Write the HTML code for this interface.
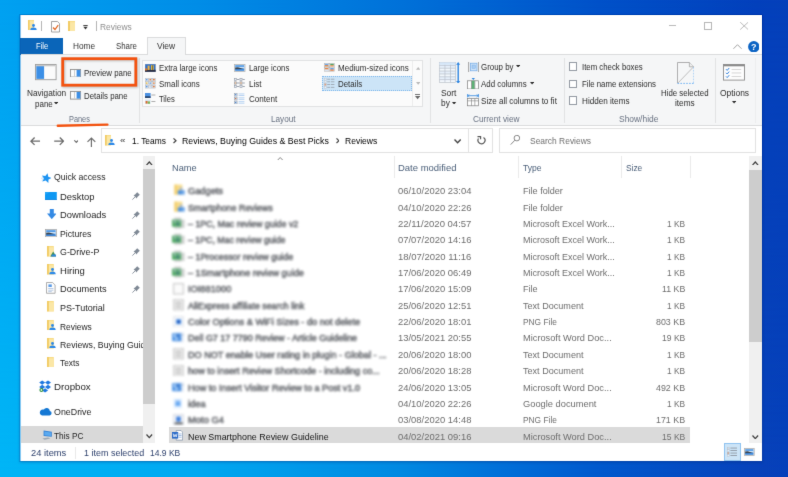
<!DOCTYPE html>
<html><head><meta charset="utf-8"><title>Reviews</title>
<style>
html,body{margin:0;padding:0}
body{width:788px;height:477px;overflow:hidden;position:relative;font-family:"Liberation Sans",sans-serif;
background:linear-gradient(to right,#00A1F1 0,#008DE7 25%,#0071D9 51%,#0051C9 76%,#0340BC 96%,#0540BA 100%)}
#w{position:absolute;left:0;top:0;width:788px;height:477px;filter:url(#soft)}
#w>div,#w>svg,#w>span{position:absolute;display:block}
#w>span{white-space:nowrap;line-height:1;transform-origin:0 50%;-webkit-text-stroke:0}
.b{filter:blur(.9px);opacity:.9;-webkit-text-stroke:.45px currentColor !important;text-shadow:0 0 1px rgba(90,92,96,.55)}
.bi{}
.s{}
</style></head><body>
<svg width="0" height="0" style="position:absolute"><filter id="soft" x="0" y="0" width="100%" height="100%" color-interpolation-filters="sRGB"><feConvolveMatrix order="3" kernelMatrix="0.0081 0.0738 0.0081 0.0738 0.6724 0.0738 0.0081 0.0738 0.0081" divisor="1" edgeMode="duplicate" preserveAlpha="true"/></filter></svg>
<div id="w">
<div style="left:0px;top:0px;width:788px;height:477px;background:linear-gradient(to right,#00B5F6 0,#00A9F1 25%,#0089E1 51%,#0071D9 63%,#0059CD 76%,#0741B9 97%,#0540BA 100%);-webkit-mask-image:linear-gradient(to bottom,transparent 0,#000 100%);mask-image:linear-gradient(to bottom,transparent 0,#000 100%)"></div>
<div style="left:20px;top:15px;width:742px;height:446px;background:#fff;box-shadow:0 0 0 1px rgba(0,60,150,.2),0 1px 3px 0 rgba(0,20,90,.3)"></div>
<div style="left:20px;top:15px;width:1px;height:446px;background:rgba(0,140,230,.45);"></div>
<svg style="left:27.8px;top:20.3px;" width="6.2" height="10" viewBox="0 0 6.2 10"><rect x="0" y="0" width="6.2" height="10" fill="#F8DC86"/><rect x="0" y="0" width="1.7360000000000002" height="10" fill="#F2CC66"/><rect x="1.7360000000000002" y="1.2" width="4.4639999999999995" height="8.8" fill="#FBE7A6"/></svg>
<svg style="left:30.4px;top:24.3px;" width="7" height="6.2" viewBox="0 0 7 6.2"><circle cx="3.5" cy="1.5" r="1.45" fill="#2B88E8"/><path d="M.3 6.2Q.3 3.6 3.5 3.6Q6.7 3.6 6.7 6.2Z" fill="#2B88E8"/></svg>
<div style="left:41px;top:21.3px;width:1px;height:10.0px;background:#b5b5b5;"></div>
<svg style="left:51px;top:21px;" width="9" height="11.5" viewBox="0 0 9 11.5"><path d="M0.5 0.5H6.5L8.5 2.5V11H0.5Z" fill="#fff" stroke="#8a8a8a" stroke-width=".8"/><path d="M2 6.5L4 8.5L7.2 4.2" fill="none" stroke="#E2641E" stroke-width="1.2"/></svg>
<svg style="left:68.2px;top:21.3px;" width="7.2" height="10" viewBox="0 0 7.2 10"><rect x="0" y="0" width="7.2" height="10" fill="#F8DC86"/><rect x="0" y="0" width="2.0160000000000005" height="10" fill="#F2CC66"/><rect x="2.0160000000000005" y="1.2" width="5.184" height="8.8" fill="#FBE7A6"/></svg>
<svg style="left:83.3px;top:25px;" width="5" height="5" viewBox="0 0 5 5"><rect x="0.3" y="0" width="4.4" height=".9" fill="#333"/><path d="M0.3 1.8H4.7L2.5 4.6Z" fill="#333"/></svg>
<div style="left:96px;top:21.3px;width:1px;height:10.0px;background:#b5b5b5;"></div>
<span style="left:100.4px;top:22.93px;font-size:8.6px;color:#8e8e8e;transform:scaleX(0.9789);">Reviews</span>
<div style="left:668.6px;top:25px;width:7.6px;height:1px;background:#b9b9b9;"></div>
<div style="left:704.4px;top:22.4px;width:7.6px;height:7.4px;background:transparent;border:1px solid #b6b6b6;box-sizing:border-box"></div>
<svg style="left:740px;top:22.2px;" width="8.4" height="7.8" viewBox="0 0 8.4 7.8"><path d="M0.2 0.2L8.2 7.6M8.2 0.2L0.2 7.6" stroke="#adadad" stroke-width=".85" fill="none"/></svg>
<svg style="left:733px;top:43.6px;" width="9" height="5.2" viewBox="0 0 9 5.2"><path d="M0.4 4.8L4.5 0.7L8.6 4.8" stroke="#a2a2a2" stroke-width="1" fill="none"/></svg>
<svg style="left:747.7px;top:40.5px;" width="11.6" height="11.6" viewBox="0 0 11.6 11.6"><circle cx="5.8" cy="5.8" r="5.7" fill="#0C64C4"/></svg>
<span style="left:750.8px;top:42.73px;font-size:8.6px;color:#fff;transform:scaleX(1.0476);font-weight:bold">?</span>
<div style="left:20px;top:37.5px;width:43.4px;height:17.1px;background:#0A65B9;"></div>
<span style="left:35.8px;top:42.13px;font-size:8.6px;color:#fff;transform:scaleX(0.8875);">File</span>
<span style="left:73.3px;top:42.13px;font-size:8.6px;color:#333;transform:scaleX(0.9635);">Home</span>
<span style="left:115.8px;top:42.13px;font-size:8.6px;color:#333;transform:scaleX(0.9155);">Share</span>
<div style="left:21px;top:54px;width:741px;height:72px;background:#F5F6F7;border-top:1px solid #DADBDC;border-bottom:1px solid #DADBDC;box-sizing:border-box"></div>
<div style="left:147px;top:37px;width:39px;height:18px;background:#F5F6F7;border:1px solid #DADBDC;border-bottom:none;box-sizing:border-box"></div>
<span style="left:157.3px;top:42.13px;font-size:8.6px;color:#333;transform:scaleX(0.9846);">View</span>
<div style="left:139.1px;top:58px;width:1.0px;height:64.5px;background:#E2E3E4;"></div>
<div style="left:429.7px;top:58px;width:1.0px;height:64.5px;background:#E2E3E4;"></div>
<div style="left:564.1px;top:58px;width:1.0px;height:64.5px;background:#E2E3E4;"></div>
<div style="left:714.8px;top:58px;width:1.0px;height:64.5px;background:#E2E3E4;"></div>
<div style="left:754.5px;top:58px;width:0.8px;height:64.5px;background:#ECEDEE;"></div>
<svg style="left:35.3px;top:64.4px;" width="21.6" height="16.2" viewBox="0 0 21.6 16.2"><rect x=".5" y=".5" width="20.6" height="15.2" fill="#fbfbfb" stroke="#9a9a9a" stroke-width=".9"/><rect x="1.3" y="1.6" width="7.8" height="13.3" fill="#3C8FE6"/><rect x="1.3" y="1" width="19" height="1.3" fill="#c9c9c9"/></svg>
<span style="left:26.5px;top:88.83px;font-size:8.6px;color:#2b2b2b;transform:scaleX(0.9653);">Navigation</span>
<span style="left:34.6px;top:99.53px;font-size:8.6px;color:#2b2b2b;transform:scaleX(0.9307);">pane</span>
<svg style="left:54px;top:101.7px;" width="4.2" height="2.6" viewBox="0 0 4.2 2.6"><path d="M0 0H4.2L2.1 2.6Z" fill="#2a2a2a"/></svg>
<svg style="left:70px;top:68.6px;" width="11.2" height="8.6" viewBox="0 0 11.2 8.6"><rect x=".5" y=".5" width="10.2" height="7.6" fill="#fdfdfd" stroke="#8d8d8d" stroke-width=".9"/><rect x="6.6" y="1" width="3.7" height="6.6" fill="#3C8FE6"/><rect x="4.2" y="1" width=".8" height="6.6" fill="#c4c4c4"/></svg>
<svg style="left:70px;top:91.1px;" width="11.2" height="8.6" viewBox="0 0 11.2 8.6"><rect x=".5" y=".5" width="10.2" height="7.6" fill="#fdfdfd" stroke="#8d8d8d" stroke-width=".9"/><rect x="6.6" y="1" width="3.7" height="6.6" fill="#3C8FE6"/><rect x="4.2" y="1" width=".8" height="6.6" fill="#c4c4c4"/></svg>
<span style="left:83.9px;top:68.93px;font-size:8.6px;color:#2b2b2b;transform:scaleX(0.9159);">Preview pane</span>
<span style="left:83.9px;top:91.53px;font-size:8.6px;color:#2b2b2b;transform:scaleX(0.9125);">Details pane</span>
<span style="left:69.1px;top:114.63px;font-size:8.6px;color:#677080;transform:scaleX(0.8574);">Panes</span>
<svg style="left:59px;top:54.6px;" width="82" height="36" viewBox="0 0 82 36"><rect x="4.7" y="4.7" width="73.1" height="26.6" fill="none" stroke="rgba(0,0,0,.22)" stroke-width="2.8" style="filter:blur(.9px)"/><rect x="3.7" y="3.7" width="73.1" height="26.5" fill="none" stroke="#F3520F" stroke-width="2.8"/></svg>
<svg style="left:55px;top:122px;" width="55" height="6" viewBox="0 0 55 6"><path d="M2.8 3.7L52.4 2.6" stroke="#F3520F" stroke-width="2.4" stroke-linecap="round" fill="none"/></svg>
<div style="left:142px;top:60px;width:281.2px;height:46.6px;background:#FBFBFB;border:1px solid #E1E2E3;box-sizing:border-box"></div>
<div style="left:412.2px;top:61px;width:0.8px;height:44.6px;background:#ECECEC;"></div>
<div style="left:322px;top:75.7px;width:90px;height:15.0px;background:#CCE4F7;border:1px dotted #7FB7EA;box-sizing:border-box"></div>
<svg style="left:415.6px;top:66.8px;" width="4.4" height="2.8" viewBox="0 0 4.4 2.8"><path d="M0 2.8L2.2 0L4.4 2.8Z" fill="#b9b9b9"/></svg>
<svg style="left:415.6px;top:81.8px;" width="4.4" height="2.8" viewBox="0 0 4.4 2.8"><path d="M0 0H4.4L2.2 2.8Z" fill="#b9b9b9"/></svg>
<svg style="left:415.2px;top:94.4px;" width="5.2" height="5.4" viewBox="0 0 5.2 5.4"><rect x="0" y="0" width="5.2" height=".9" fill="#666"/><path d="M0 2H5.2L2.6 5.2Z" fill="#666"/></svg>
<svg style="left:145.3px;top:64.3px;" width="10.6" height="7.8" viewBox="0 0 10.6 7.8"><rect width="10.6" height="7.8" fill="#2D6FCC" stroke="#9aa3af" stroke-width=".8"/><rect x="0" y="5.8" width="10.6" height="2" fill="#2A2F45"/><rect x="2.6" y="1.6" width="2" height="4.4" fill="#F2B13A"/><rect x="6" y="1.2" width="2.6" height="4.8" fill="#F5C53C"/><rect x="6.9" y="1.2" width=".7" height="4.8" fill="#3a3a3a"/><rect x="0" y="4.4" width="2.2" height="2" fill="#d9772e"/></svg>
<svg style="left:145.3px;top:78.2px;" width="10.8" height="10.4" viewBox="0 0 10.8 10.4"><rect x="0.2" y="0.2" width="3" height="2.9" fill="#eef1f5" stroke="#a9afb8" stroke-width=".45"/><rect x="0.9" y="0.9" width="1.6" height="1.5" fill="#5B9BE6"/><rect x="3.8000000000000003" y="0.2" width="3" height="2.9" fill="#eef1f5" stroke="#a9afb8" stroke-width=".45"/><rect x="4.5" y="0.9" width="1.6" height="1.5" fill="#E07B39"/><rect x="7.4" y="0.2" width="3" height="2.9" fill="#eef1f5" stroke="#a9afb8" stroke-width=".45"/><rect x="8.1" y="0.9" width="1.6" height="1.5" fill="#D96A2B"/><rect x="0.2" y="3.7" width="3" height="2.9" fill="#eef1f5" stroke="#a9afb8" stroke-width=".45"/><rect x="0.9" y="4.4" width="1.6" height="1.5" fill="#F0C24A"/><rect x="3.8000000000000003" y="3.7" width="3" height="2.9" fill="#eef1f5" stroke="#a9afb8" stroke-width=".45"/><rect x="4.5" y="4.4" width="1.6" height="1.5" fill="#6FA8EA"/><rect x="7.4" y="3.7" width="3" height="2.9" fill="#eef1f5" stroke="#a9afb8" stroke-width=".45"/><rect x="8.1" y="4.4" width="1.6" height="1.5" fill="#E58A4A"/><rect x="0.2" y="7.2" width="3" height="2.9" fill="#eef1f5" stroke="#a9afb8" stroke-width=".45"/><rect x="0.9" y="7.9" width="1.6" height="1.5" fill="#4F93E0"/><rect x="3.8000000000000003" y="7.2" width="3" height="2.9" fill="#eef1f5" stroke="#a9afb8" stroke-width=".45"/><rect x="4.5" y="7.9" width="1.6" height="1.5" fill="#C9D8EC"/><rect x="7.4" y="7.2" width="3" height="2.9" fill="#eef1f5" stroke="#a9afb8" stroke-width=".45"/><rect x="8.1" y="7.9" width="1.6" height="1.5" fill="#D8763A"/></svg>
<svg style="left:145.3px;top:92.6px;" width="10.6" height="11.6" viewBox="0 0 10.6 11.6"><rect x="0" y="0" width="5.6" height="5" fill="#4A90E2"/><rect x="0" y="3.2" width="5.6" height="1.8" fill="#29466F"/><rect x="6.4" y="1.6" width="4" height=".8" fill="#9a9a9a"/><rect x="0" y="6.4" width="5.6" height="5" fill="#D9E5F2"/><rect x=".6" y="8" width="2" height="2.6" fill="#D96A2B"/><rect x="2.8" y="8.4" width="2.2" height="2.4" fill="#7FB65A"/><rect x="6.4" y="8" width="4" height=".8" fill="#9a9a9a"/></svg>
<svg style="left:234.2px;top:64.2px;" width="11.4" height="7.8" viewBox="0 0 11.4 7.8"><rect x=".4" y=".4" width="10.6" height="7.0" fill="#f4f4f4" stroke="#b4b4b4" stroke-width=".8"/><rect x="1.2" y="1.2" width="9.0" height="5.4" fill="#4A97E6"/><rect x="1.2" y="2.8200000000000003" width="9.0" height="1.62" fill="#CFE3F6"/><path d="M1.2 3.468L3.8999999999999995 3.252L9.749999999999998 5.088L1.2 5.412000000000001Z" fill="#3A4450"/><rect x="1.2" y="5.412000000000001" width="9.0" height="1.1880000000000002" fill="#3C86DA"/></svg>
<svg style="left:234.4px;top:78.2px;" width="11" height="10.4" viewBox="0 0 11 10.4"><rect x="0.3" y="0.3" width="2.2" height="2.4" fill="#E9EEF5" stroke="#8e96a3" stroke-width=".6"/><rect x="3.0" y="1.1" width="2.2" height=".8" fill="#858d9a"/><rect x="0.3" y="3.8" width="2.2" height="2.4" fill="#F0C9A8" stroke="#8e96a3" stroke-width=".6"/><rect x="3.0" y="4.6" width="2.2" height=".8" fill="#858d9a"/><rect x="0.3" y="7.3" width="2.2" height="2.4" fill="#E9EEF5" stroke="#8e96a3" stroke-width=".6"/><rect x="3.0" y="8.1" width="2.2" height=".8" fill="#858d9a"/><rect x="5.8999999999999995" y="0.3" width="2.2" height="2.4" fill="#E9EEF5" stroke="#8e96a3" stroke-width=".6"/><rect x="8.6" y="1.1" width="2.2" height=".8" fill="#858d9a"/><rect x="5.8999999999999995" y="3.8" width="2.2" height="2.4" fill="#F0C9A8" stroke="#8e96a3" stroke-width=".6"/><rect x="8.6" y="4.6" width="2.2" height=".8" fill="#858d9a"/><rect x="5.8999999999999995" y="7.3" width="2.2" height="2.4" fill="#E9EEF5" stroke="#8e96a3" stroke-width=".6"/><rect x="8.6" y="8.1" width="2.2" height=".8" fill="#858d9a"/></svg>
<svg style="left:234.4px;top:92.6px;" width="11" height="11.6" viewBox="0 0 11 11.6"><rect x=".3" y="0.3" width="2.8" height="2.8" fill="#E6EEF8" stroke="#8f9bab" stroke-width=".55"/><rect x="1.1" y="1.1" width="1.2" height="1.2" fill="#3F79C6"/><rect x="4.6" y="0.6" width="5.8" height=".7" fill="#9CC3EF"/><rect x="4.6" y="2.0" width="5.8" height=".7" fill="#9CC3EF"/><rect x=".3" y="4.2" width="2.8" height="2.8" fill="#E6EEF8" stroke="#8f9bab" stroke-width=".55"/><rect x="1.1" y="5.0" width="1.2" height="1.2" fill="#C7673A"/><rect x="4.6" y="4.5" width="5.8" height=".7" fill="#9CC3EF"/><rect x="4.6" y="5.9" width="5.8" height=".7" fill="#9CC3EF"/><rect x=".3" y="8.1" width="2.8" height="2.8" fill="#E6EEF8" stroke="#8f9bab" stroke-width=".55"/><rect x="1.1" y="8.9" width="1.2" height="1.2" fill="#3F79C6"/><rect x="4.6" y="8.4" width="5.8" height=".7" fill="#9CC3EF"/><rect x="4.6" y="9.8" width="5.8" height=".7" fill="#9CC3EF"/></svg>
<svg style="left:324.2px;top:63.4px;" width="10.8" height="8.6" viewBox="0 0 10.8 8.6"><rect x="0.3" y="0.3" width="4.6" height="3.6" fill="#fff" stroke="#a8a8a8" stroke-width=".5"/><rect x="0.8" y="0.8" width="3.6" height="1.4" fill="#6FA8EA"/><rect x="0.8" y="2.1999999999999997" width="3.6" height="1.2" fill="#D9772E"/><rect x="5.7" y="0.3" width="4.6" height="3.6" fill="#fff" stroke="#a8a8a8" stroke-width=".5"/><rect x="6.2" y="0.8" width="3.6" height="1.4" fill="#4FA36A"/><rect x="6.2" y="2.1999999999999997" width="3.6" height="1.2" fill="#E58A4A"/><rect x="0.3" y="4.6" width="4.6" height="3.6" fill="#fff" stroke="#a8a8a8" stroke-width=".5"/><rect x="0.8" y="5.1" width="3.6" height="1.4" fill="#E07B39"/><rect x="0.8" y="6.5" width="3.6" height="1.2" fill="#C9D8EC"/><rect x="5.7" y="4.6" width="4.6" height="3.6" fill="#fff" stroke="#a8a8a8" stroke-width=".5"/><rect x="6.2" y="5.1" width="3.6" height="1.4" fill="#5B9BE6"/><rect x="6.2" y="6.5" width="3.6" height="1.2" fill="#D96A2B"/></svg>
<svg style="left:324.2px;top:78.2px;" width="10.8" height="10.6" viewBox="0 0 10.8 10.6"><rect x=".3" y="0.2" width="1.9" height="1.9" fill="#EEF2F7" stroke="#b4b9c2" stroke-width=".4"/><rect x="3.2" y="0.8" width="3" height=".7" fill="#8e949c"/><rect x="7" y="0.8" width="3.4" height=".7" fill="#8e949c"/><rect x=".3" y="2.9000000000000004" width="1.9" height="1.9" fill="#EEF2F7" stroke="#b4b9c2" stroke-width=".4"/><rect x="3.2" y="3.5" width="3" height=".7" fill="#8e949c"/><rect x="7" y="3.5" width="3.4" height=".7" fill="#8e949c"/><rect x=".3" y="5.6000000000000005" width="1.9" height="1.9" fill="#E8A07A" stroke="#b4b9c2" stroke-width=".4"/><rect x="3.2" y="6.2" width="3" height=".7" fill="#8e949c"/><rect x="7" y="6.2" width="3.4" height=".7" fill="#8e949c"/><rect x=".3" y="8.3" width="1.9" height="1.9" fill="#EEF2F7" stroke="#b4b9c2" stroke-width=".4"/><rect x="3.2" y="8.900000000000002" width="3" height=".7" fill="#8e949c"/><rect x="7" y="8.900000000000002" width="3.4" height=".7" fill="#8e949c"/></svg>
<span style="left:159.2px;top:64.23px;font-size:8.6px;color:#2b2b2b;transform:scaleX(0.9123);">Extra large icons</span>
<span style="left:159.2px;top:79.73px;font-size:8.6px;color:#2b2b2b;transform:scaleX(0.9283);">Small icons</span>
<span style="left:159.2px;top:94.93px;font-size:8.6px;color:#2b2b2b;transform:scaleX(0.8862);">Tiles</span>
<span style="left:248.8px;top:64.23px;font-size:8.6px;color:#2b2b2b;transform:scaleX(0.9069);">Large icons</span>
<span style="left:248.8px;top:79.73px;font-size:8.6px;color:#2b2b2b;transform:scaleX(0.9346);">List</span>
<span style="left:248.8px;top:94.93px;font-size:8.6px;color:#2b2b2b;transform:scaleX(0.9399);">Content</span>
<span style="left:338.4px;top:64.23px;font-size:8.6px;color:#2b2b2b;transform:scaleX(0.9322);">Medium-sized icons</span>
<span style="left:338.4px;top:79.73px;font-size:8.6px;color:#2b2b2b;transform:scaleX(0.9170);">Details</span>
<span style="left:271.2px;top:114.63px;font-size:8.6px;color:#677080;transform:scaleX(0.9530);">Layout</span>
<svg style="left:438.8px;top:62px;" width="17" height="21" viewBox="0 0 17 21"><rect x=".4" y=".4" width="16" height="20" fill="#F3F8FD" stroke="#b4bac2" stroke-width=".6"/><rect x=".8" y="3.4" width="15.2" height="2.4" fill="#E6F0FB"/><rect x=".8" y="9.2" width="15.2" height="2.4" fill="#E6F0FB"/><rect x=".8" y="15.0" width="15.2" height="2.4" fill="#E6F0FB"/><rect x=".4" y="2.9" width="16" height=".7" fill="#b3bcc8"/><rect x=".4" y="5.8" width="16" height=".7" fill="#b3bcc8"/><rect x=".4" y="8.7" width="16" height=".7" fill="#b3bcc8"/><rect x=".4" y="11.6" width="16" height=".7" fill="#b3bcc8"/><rect x=".4" y="14.5" width="16" height=".7" fill="#b3bcc8"/><rect x=".4" y="17.4" width="16" height=".7" fill="#b3bcc8"/><rect x="5.6" y=".4" width=".7" height="20" fill="#b9c1cc"/><rect x="11" y=".4" width=".7" height="20" fill="#b9c1cc"/><rect x=".4" y=".4" width="16" height="2.4" fill="#D5E6F8"/></svg>
<svg style="left:455.8px;top:61.6px;" width="4.4" height="21.8" viewBox="0 0 4.4 21.8"><path d="M2.2 0L4.3 2.8H2.9V19H4.3L2.2 21.8L0.1 19H1.5V2.8H0.1Z" fill="#2F86E0"/></svg>
<span style="left:441.2px;top:88.93px;font-size:8.6px;color:#2b2b2b;transform:scaleX(0.9768);">Sort</span>
<span style="left:441.2px;top:98.93px;font-size:8.6px;color:#2b2b2b;transform:scaleX(0.9694);">by</span>
<svg style="left:452.4px;top:101.9px;" width="4.2" height="2.6" viewBox="0 0 4.2 2.6"><path d="M0 0H4.2L2.1 2.6Z" fill="#2a2a2a"/></svg>
<svg style="left:467.6px;top:61.8px;" width="11.4" height="10.4" viewBox="0 0 11.4 10.4"><rect x=".3" y="0" width=".8" height="10.4" fill="#8a8a8a"/><rect x="10.3" y="0" width=".8" height="10.4" fill="#8a8a8a"/><rect x="2.4" y="1.2" width="6.6" height="7.6" fill="#CFE3F8" stroke="#6FA9E6" stroke-width=".7"/><rect x="4" y="3" width="3.4" height="3.4" fill="#A9CDF3" stroke="#6FA9E6" stroke-width=".4"/></svg>
<span style="left:481.1px;top:62.63px;font-size:8.6px;color:#2b2b2b;transform:scaleX(0.9191);">Group by</span>
<svg style="left:515.8px;top:64.9px;" width="4.2" height="2.6" viewBox="0 0 4.2 2.6"><path d="M0 0H4.2L2.1 2.6Z" fill="#2a2a2a"/></svg>
<svg style="left:467px;top:77.8px;" width="12" height="11.4" viewBox="0 0 12 11.4"><path d="M4.6 0H8L6.3 2Z" fill="#2F86E0"/><rect x=".4" y="2.8" width="11.2" height="8.2" fill="#fff" stroke="#7d7d7d" stroke-width=".7"/><rect x="4.6" y="2.8" width="3" height="8.2" fill="#5DB075"/><rect x="4.2" y="2.8" width=".6" height="8.2" fill="#7d7d7d"/><rect x="7.6" y="2.8" width=".6" height="8.2" fill="#7d7d7d"/></svg>
<span style="left:481.1px;top:79.93px;font-size:8.6px;color:#2b2b2b;transform:scaleX(0.9177);">Add columns</span>
<svg style="left:529.6px;top:82.3px;" width="4.2" height="2.6" viewBox="0 0 4.2 2.6"><path d="M0 0H4.2L2.1 2.6Z" fill="#2a2a2a"/></svg>
<svg style="left:467px;top:94.4px;" width="12" height="12.2" viewBox="0 0 12 12.2"><path d="M.4 0V3.4M11.6 0V3.4M.8 1.7H11.2" stroke="#2F86E0" stroke-width=".8" fill="none"/><path d="M2.4 .4L.8 1.7L2.4 3M9.6 .4L11.2 1.7L9.6 3" stroke="#2F86E0" stroke-width=".7" fill="none"/><rect x=".4" y="4.6" width="11.2" height="7.2" fill="#fff" stroke="#7d7d7d" stroke-width=".7"/><rect x=".4" y="6.6" width="11.2" height=".6" fill="#7d7d7d"/><rect x="4" y="4.6" width=".6" height="7.2" fill="#7d7d7d"/><rect x="7.6" y="4.6" width=".6" height="7.2" fill="#7d7d7d"/></svg>
<span style="left:481.1px;top:97.03px;font-size:8.6px;color:#2b2b2b;transform:scaleX(0.9403);">Size all columns to fit</span>
<span style="left:472.7px;top:114.63px;font-size:8.6px;color:#677080;transform:scaleX(0.9637);">Current view</span>
<div style="left:568.6px;top:62.4px;width:8.4px;height:8.4px;background:#fff;border:1px solid #949aa3;box-sizing:border-box"></div>
<div style="left:568.6px;top:79.6px;width:8.4px;height:8.4px;background:#fff;border:1px solid #949aa3;box-sizing:border-box"></div>
<div style="left:568.6px;top:96.4px;width:8.4px;height:8.4px;background:#fff;border:1px solid #949aa3;box-sizing:border-box"></div>
<span style="left:581.5px;top:62.63px;font-size:8.6px;color:#2b2b2b;transform:scaleX(0.9077);">Item check boxes</span>
<span style="left:581.5px;top:79.93px;font-size:8.6px;color:#2b2b2b;transform:scaleX(0.9099);">File name extensions</span>
<span style="left:581.5px;top:97.03px;font-size:8.6px;color:#2b2b2b;transform:scaleX(0.9470);">Hidden items</span>
<svg style="left:676.6px;top:61.8px;" width="17.8" height="22" viewBox="0 0 17.8 22"><path d="M.5 .5H12.4L16.6 4.8" fill="none" stroke="#9a9a9a" stroke-width=".8"/><path d="M.5 .5V21.2" stroke="#9a9a9a" stroke-width=".8"/><path d="M12.4 .5V4.8H16.6" fill="#f1f1f1" stroke="#9a9a9a" stroke-width=".7"/><path d="M16.2 5.2L1 21" stroke="#a5a5a5" stroke-width=".7"/><path d="M.5 21.4H17M17 5V21.4" stroke="#6FB2F4" stroke-width="1" stroke-dasharray="1.6 1.3" fill="none"/></svg>
<span style="left:661.1px;top:88.93px;font-size:8.6px;color:#2b2b2b;transform:scaleX(0.9121);">Hide selected</span>
<span style="left:675.3px;top:99.13px;font-size:8.6px;color:#2b2b2b;transform:scaleX(0.9588);">items</span>
<span style="left:619.1px;top:114.63px;font-size:8.6px;color:#677080;transform:scaleX(0.9815);">Show/hide</span>
<svg style="left:723px;top:64px;" width="22" height="16.8" viewBox="0 0 22 16.8"><rect x=".5" y=".5" width="21" height="15.6" fill="#fdfdfd" stroke="#8a8a8a" stroke-width=".9"/><rect x=".5" y=".5" width="21" height="1.8" fill="#8a8a8a"/><path d="M3 5.2L4.2 6.4L6.2 4.0" stroke="#2F7FDB" stroke-width="1" fill="none"/><rect x="8.6" y="5.0" width="9.6" height=".7" fill="#c4c4c4"/><path d="M3 8.8L4.2 10.0L6.2 7.6" stroke="#2F7FDB" stroke-width="1" fill="none"/><rect x="8.6" y="8.6" width="9.6" height=".7" fill="#c4c4c4"/><path d="M3 12.4L4.2 13.600000000000001L6.2 11.2" stroke="#2F7FDB" stroke-width="1" fill="none"/><rect x="8.6" y="12.2" width="9.6" height=".7" fill="#c4c4c4"/></svg>
<span style="left:719.5px;top:88.83px;font-size:8.6px;color:#2b2b2b;transform:scaleX(0.9823);">Options</span>
<svg style="left:732.2px;top:101.1px;" width="4.2" height="2.6" viewBox="0 0 4.2 2.6"><path d="M0 0H4.2L2.1 2.6Z" fill="#2a2a2a"/></svg>
<svg style="left:30px;top:137.2px;" width="10.4" height="8.4" viewBox="0 0 10.4 8.4"><path d="M10.2 4.2H.9M4.6 .5L.9 4.2L4.6 7.9" stroke="#6a6a6a" stroke-width="1.3" fill="none"/></svg>
<svg style="left:53.8px;top:137.2px;" width="10.4" height="8.4" viewBox="0 0 10.4 8.4"><path d="M.2 4.2H9.5M5.8 .5L9.5 4.2L5.8 7.9" stroke="#6a6a6a" stroke-width="1.3" fill="none"/></svg>
<svg style="left:73.8px;top:139.9px;" width="4.6" height="3" viewBox="0 0 4.6 3"><path d="M.3 .3L2.3 2.4L4.3 .3" stroke="#6a6a6a" stroke-width="1.1" fill="none"/></svg>
<svg style="left:87.4px;top:136.9px;" width="8.8" height="9.8" viewBox="0 0 8.8 9.8"><path d="M4.4 9.9V1M.5 4.8L4.4 1L8.3 4.8" stroke="#6a6a6a" stroke-width="1.15" fill="none"/></svg>
<div style="left:101px;top:128px;width:392px;height:25px;background:#fff;border:1px solid #E2E2E2;box-sizing:border-box"></div>
<div style="left:468px;top:129px;width:1px;height:23px;background:#E3E3E3;"></div>
<svg style="left:104.8px;top:135.4px;" width="6.4" height="10.4" viewBox="0 0 6.4 10.4"><rect x="0" y="0" width="6.4" height="10.4" fill="#F8DC86"/><rect x="0" y="0" width="1.7920000000000003" height="10.4" fill="#F2CC66"/><rect x="1.7920000000000003" y="1.248" width="4.608" height="9.152000000000001" fill="#FBE7A6"/></svg>
<svg style="left:107.6px;top:139.2px;" width="7" height="6.2" viewBox="0 0 7 6.2"><circle cx="3.5" cy="1.5" r="1.45" fill="#2B88E8"/><path d="M.3 6.2Q.3 3.6 3.5 3.6Q6.7 3.6 6.7 6.2Z" fill="#2B88E8"/></svg>
<span style="left:119.8px;top:136.80px;font-size:7.5px;color:#333;transform:scaleX(1.2944);">«</span>
<span style="left:131.7px;top:136.30px;font-size:9.8px;color:#000;transform:scaleX(0.8565);">1. Teams</span>
<svg style="left:173.2px;top:138.2px;" width="3.6" height="5.4" viewBox="0 0 3.6 5.4"><path d="M.5 .4L3 2.7L.5 5" stroke="#444" stroke-width="1.2" fill="none"/></svg>
<span style="left:181.8px;top:136.30px;font-size:9.8px;color:#000;transform:scaleX(0.8956);">Reviews, Buying Guides &amp; Best Picks</span>
<svg style="left:335.8px;top:138.2px;" width="3.6" height="5.4" viewBox="0 0 3.6 5.4"><path d="M.5 .4L3 2.7L.5 5" stroke="#444" stroke-width="1.2" fill="none"/></svg>
<span style="left:345.0px;top:136.30px;font-size:9.8px;color:#000;transform:scaleX(0.8722);">Reviews</span>
<svg style="left:453.8px;top:138.8px;" width="7.2" height="4.8" viewBox="0 0 7.2 4.8"><path d="M.5 .5L3.6 3.8L6.7 .5" stroke="#444" stroke-width="1.4" fill="none"/></svg>
<svg style="left:476.8px;top:135.4px;" width="9" height="10.2" viewBox="0 0 9 10.2"><path d="M6.51 2.43A3.5 3.5 0 1 1 1.47 3.55" stroke="#555" stroke-width="1.2" fill="none"/><path d="M.5 1.6H3.6V4.3" stroke="#555" stroke-width="1.15" fill="none"/></svg>
<div style="left:499px;top:128px;width:257px;height:25px;background:#fff;border:1px solid #E2E2E2;box-sizing:border-box"></div>
<svg style="left:509.8px;top:135.4px;" width="10.4" height="10.2" viewBox="0 0 10.4 10.2"><circle cx="6.9" cy="3.1" r="2.8" stroke="#7d7d7d" stroke-width=".9" fill="none"/><path d="M4.9 5.2L.7 9.6" stroke="#7d7d7d" stroke-width=".95"/></svg>
<span style="left:530.3px;top:136.30px;font-size:9.8px;color:#6f6f6f;transform:scaleX(0.8616);">Search Reviews</span>
<div style="left:143.2px;top:156px;width:12.2px;height:287px;background:#F0F0F0;"></div>
<div style="left:143.2px;top:169.4px;width:12.2px;height:234.2px;background:#CDCDCD;"></div>
<svg style="left:146.4px;top:160.6px;" width="6.6" height="4.6" viewBox="0 0 6.6 4.6"><path d="M.5 4.1L3.3 1L6.1 4.1" stroke="#3a3a3a" stroke-width="1.2" fill="none"/></svg>
<svg style="left:146.4px;top:434.4px;" width="6.6" height="4.6" viewBox="0 0 6.6 4.6"><path d="M.5 .5L3.3 3.6L6.1 .5" stroke="#3a3a3a" stroke-width="1.2" fill="none"/></svg>
<div style="left:21px;top:426.2px;width:122.2px;height:16.6px;background:#D9D9D9;"></div>
<svg style="left:41px;top:172.8px;" width="10.4" height="10" viewBox="0 0 10.4 10"><path d="M5.4 .2L6.9 3.3L10.3 3.7L7.8 6L8.5 9.4L5.4 7.7L2.3 9.4L3 6L.5 3.7L3.9 3.3Z" fill="#1E94F2" transform="rotate(14 5.4 5)"/><path d="M.2 5.4L2.4 4.6M.8 7.4L2.6 6.4" stroke="#9CCBF5" stroke-width=".7"/></svg>
<span style="left:53.8px;top:172.40px;font-size:9.8px;color:#1f1f1f;transform:scaleX(0.8839);">Quick access</span>
<svg style="left:132.2px;top:192px;" width="8" height="8" viewBox="0 0 8 8"><path d="M.4 7.6L3.2 4.8" stroke="#7f8995" stroke-width=".9"/><path d="M1.6 3.2L4.8 6.4L5.4 4.9L7.8 2.8L5.2 .2L3.1 2.6Z" fill="#7f8995"/></svg>
<svg style="left:132.2px;top:210.6px;" width="8" height="8" viewBox="0 0 8 8"><path d="M.4 7.6L3.2 4.8" stroke="#7f8995" stroke-width=".9"/><path d="M1.6 3.2L4.8 6.4L5.4 4.9L7.8 2.8L5.2 .2L3.1 2.6Z" fill="#7f8995"/></svg>
<svg style="left:132.2px;top:229.2px;" width="8" height="8" viewBox="0 0 8 8"><path d="M.4 7.6L3.2 4.8" stroke="#7f8995" stroke-width=".9"/><path d="M1.6 3.2L4.8 6.4L5.4 4.9L7.8 2.8L5.2 .2L3.1 2.6Z" fill="#7f8995"/></svg>
<svg style="left:132.2px;top:247.7px;" width="8" height="8" viewBox="0 0 8 8"><path d="M.4 7.6L3.2 4.8" stroke="#7f8995" stroke-width=".9"/><path d="M1.6 3.2L4.8 6.4L5.4 4.9L7.8 2.8L5.2 .2L3.1 2.6Z" fill="#7f8995"/></svg>
<svg style="left:132.2px;top:266.2px;" width="8" height="8" viewBox="0 0 8 8"><path d="M.4 7.6L3.2 4.8" stroke="#7f8995" stroke-width=".9"/><path d="M1.6 3.2L4.8 6.4L5.4 4.9L7.8 2.8L5.2 .2L3.1 2.6Z" fill="#7f8995"/></svg>
<svg style="left:132.2px;top:284.7px;" width="8" height="8" viewBox="0 0 8 8"><path d="M.4 7.6L3.2 4.8" stroke="#7f8995" stroke-width=".9"/><path d="M1.6 3.2L4.8 6.4L5.4 4.9L7.8 2.8L5.2 .2L3.1 2.6Z" fill="#7f8995"/></svg>
<svg style="left:45.2px;top:192px;" width="11.8" height="8.4" viewBox="0 0 11.8 8.4"><rect x="0" y="0" width="11.8" height="8.2" fill="#0E98F3"/><rect x="0" y="7.4" width="11.8" height=".9" fill="#1A7FD6"/><path d="M0 8V3L5 0H0Z" fill="#22A4F8"/></svg>
<span style="left:60.0px;top:191.80px;font-size:9.8px;color:#1f1f1f;transform:scaleX(0.9624);">Desktop</span>
<svg style="left:46.8px;top:209px;" width="9.6" height="10.2" viewBox="0 0 9.6 10.2"><path d="M2.8 0H6.8V4.5H9.6L4.8 10.2L0 4.5H2.8Z" fill="#348AE4"/></svg>
<span style="left:60.0px;top:210.20px;font-size:9.8px;color:#1f1f1f;transform:scaleX(0.9532);">Downloads</span>
<svg style="left:45.2px;top:228.6px;" width="11.8" height="8.2" viewBox="0 0 11.8 8.2"><rect x=".4" y=".4" width="11.0" height="7.3999999999999995" fill="#f4f4f4" stroke="#a9a9a9" stroke-width=".8"/><rect x="1.2" y="1.2" width="9.4" height="5.799999999999999" fill="#4A97E6"/><rect x="1.2" y="2.9399999999999995" width="9.4" height="1.7399999999999995" fill="#CFE3F6"/><path d="M1.2 3.6359999999999992L4.02 3.404L10.129999999999999 5.3759999999999994L1.2 5.723999999999999Z" fill="#3A4450"/><rect x="1.2" y="5.723999999999999" width="9.4" height="1.2759999999999998" fill="#3C86DA"/></svg>
<span style="left:60.0px;top:228.60px;font-size:9.8px;color:#1f1f1f;transform:scaleX(0.8872);">Pictures</span>
<svg style="left:46.9px;top:246.4px;" width="6.8" height="10.4" viewBox="0 0 6.8 10.4"><rect x="0" y="0" width="6.8" height="10.4" fill="#F8DC86"/><rect x="0" y="0" width="1.9040000000000001" height="10.4" fill="#F2CC66"/><rect x="1.9040000000000001" y="1.248" width="4.896" height="9.152000000000001" fill="#FBE7A6"/></svg>
<svg style="left:50px;top:250.8px;" width="6.4" height="6" viewBox="0 0 6.4 6"><path d="M3.2 .4L6.2 5.4H.2Z" fill="#3F8F5A"/><path d="M2.2 3.6H6.2V5.6H1Z" fill="#2F86E0"/></svg>
<span style="left:60.0px;top:247.10px;font-size:9.8px;color:#1f1f1f;transform:scaleX(0.9025);">G-Drive-P</span>
<svg style="left:46.9px;top:264.4px;" width="6.8" height="10.4" viewBox="0 0 6.8 10.4"><rect x="0" y="0" width="6.8" height="10.4" fill="#F8DC86"/><rect x="0" y="0" width="1.9040000000000001" height="10.4" fill="#F2CC66"/><rect x="1.9040000000000001" y="1.248" width="4.896" height="9.152000000000001" fill="#FBE7A6"/></svg>
<svg style="left:49.2px;top:268.4px;" width="7" height="6.2" viewBox="0 0 7 6.2"><circle cx="3.5" cy="1.5" r="1.45" fill="#2B88E8"/><path d="M.3 6.2Q.3 3.6 3.5 3.6Q6.7 3.6 6.7 6.2Z" fill="#2B88E8"/></svg>
<span style="left:60.0px;top:265.70px;font-size:9.8px;color:#1f1f1f;transform:scaleX(0.9729);">Hiring</span>
<svg style="left:46.4px;top:281.8px;" width="9.6" height="11.8" viewBox="0 0 9.6 11.8"><path d="M.5 .5H6.6L9.1 3V11.3H.5Z" fill="#fdfdfd" stroke="#9a9a9a" stroke-width=".8"/><rect x="2.4" y="2.4" width="3.4" height="2.6" fill="#5B9BE6"/><rect x="2.2" y="6" width="5.2" height=".7" fill="#9db7d9"/><rect x="2.2" y="7.8" width="5.2" height=".7" fill="#9db7d9"/><rect x="2.2" y="9.4" width="3.6" height=".7" fill="#9db7d9"/></svg>
<span style="left:60.0px;top:284.20px;font-size:9.8px;color:#1f1f1f;transform:scaleX(0.9402);">Documents</span>
<svg style="left:46.9px;top:301.2px;" width="6.8" height="10.4" viewBox="0 0 6.8 10.4"><rect x="0" y="0" width="6.8" height="10.4" fill="#F8DC86"/><rect x="0" y="0" width="1.9040000000000001" height="10.4" fill="#F2CC66"/><rect x="1.9040000000000001" y="1.248" width="4.896" height="9.152000000000001" fill="#FBE7A6"/></svg>
<span style="left:60.0px;top:302.50px;font-size:9.8px;color:#1f1f1f;transform:scaleX(0.9210);">PS-Tutorial</span>
<svg style="left:46.9px;top:320px;" width="6.8" height="10.4" viewBox="0 0 6.8 10.4"><rect x="0" y="0" width="6.8" height="10.4" fill="#F8DC86"/><rect x="0" y="0" width="1.9040000000000001" height="10.4" fill="#F2CC66"/><rect x="1.9040000000000001" y="1.248" width="4.896" height="9.152000000000001" fill="#FBE7A6"/></svg>
<svg style="left:49.2px;top:324px;" width="7" height="6.2" viewBox="0 0 7 6.2"><circle cx="3.5" cy="1.5" r="1.45" fill="#2B88E8"/><path d="M.3 6.2Q.3 3.6 3.5 3.6Q6.7 3.6 6.7 6.2Z" fill="#2B88E8"/></svg>
<span style="left:60.0px;top:321.60px;font-size:9.8px;color:#1f1f1f;transform:scaleX(0.8560);">Reviews</span>
<svg style="left:46.9px;top:338.2px;" width="6.8" height="10.4" viewBox="0 0 6.8 10.4"><rect x="0" y="0" width="6.8" height="10.4" fill="#F8DC86"/><rect x="0" y="0" width="1.9040000000000001" height="10.4" fill="#F2CC66"/><rect x="1.9040000000000001" y="1.248" width="4.896" height="9.152000000000001" fill="#FBE7A6"/></svg>
<svg style="left:49.2px;top:342.2px;" width="7" height="6.2" viewBox="0 0 7 6.2"><circle cx="3.5" cy="1.5" r="1.45" fill="#2B88E8"/><path d="M.3 6.2Q.3 3.6 3.5 3.6Q6.7 3.6 6.7 6.2Z" fill="#2B88E8"/></svg>
<div style="left:60.4px;top:336px;width:82.8px;height:16px;overflow:hidden"><span style="position:absolute;left:0;top:3.6px;font-size:9.8px;color:#1f1f1f;white-space:nowrap;line-height:1;transform-origin:0 50%;transform:scaleX(0.8908)">Reviews, Buying Guides &amp; Best Picks</span></div>
<svg style="left:46.9px;top:356.8px;" width="6.8" height="10.4" viewBox="0 0 6.8 10.4"><rect x="0" y="0" width="6.8" height="10.4" fill="#F8DC86"/><rect x="0" y="0" width="1.9040000000000001" height="10.4" fill="#F2CC66"/><rect x="1.9040000000000001" y="1.248" width="4.896" height="9.152000000000001" fill="#FBE7A6"/></svg>
<span style="left:60.0px;top:357.90px;font-size:9.8px;color:#1f1f1f;transform:scaleX(0.8525);">Texts</span>
<svg style="left:38.6px;top:380.2px;" width="12.4" height="12.8" viewBox="0 0 12.4 12.8"><path d="M3.2 0.3999999999999999L6.2 2.6L3.2 4.800000000000001L0.20000000000000018 2.6Z" fill="#1E78E0"/><path d="M9 0.3999999999999999L12 2.6L9 4.800000000000001L6 2.6Z" fill="#1E78E0"/><path d="M3.2 4.8L6.2 7L3.2 9.2L0.20000000000000018 7Z" fill="#1E78E0"/><path d="M9 4.8L12 7L9 9.2L6 7Z" fill="#1E78E0"/><path d="M6.1 8.2L9.1 10.4L6.1 12.600000000000001L3.0999999999999996 10.4Z" fill="#1E78E0"/><circle cx="2.4" cy="10" r="2" fill="#2F8F3E"/><circle cx="2.4" cy="10" r=".9" fill="#e8f5e8"/></svg>
<span style="left:53.8px;top:382.40px;font-size:9.8px;color:#1f1f1f;transform:scaleX(0.9911);">Dropbox</span>
<svg style="left:38.6px;top:407px;" width="13" height="8.6" viewBox="0 0 13 8.6"><path d="M3 8.4H10.6A2.3 2.3 0 0 0 10.9 3.9A3.3 3.3 0 0 0 4.8 2.6A2.9 2.9 0 0 0 3 8.4Z" fill="#1578D4"/></svg>
<span style="left:53.8px;top:406.80px;font-size:9.8px;color:#1f1f1f;transform:scaleX(0.9036);">OneDrive</span>
<svg style="left:42px;top:430px;" width="10.6" height="10" viewBox="0 0 10.6 10"><path d="M1.6 .6L9.8 1.8V6.8L1.6 6Z" fill="#2F7FD6"/><path d="M2.4 1.6L9 2.6V6L2.4 5.2Z" fill="#5AAAF0"/><path d="M.4 8.6L6 7.4L8.4 8.6L2.6 9.8Z" fill="#9aa7b4"/></svg>
<span style="left:53.8px;top:430.90px;font-size:9.8px;color:#1f1f1f;transform:scaleX(0.8466);">This PC</span>
<svg style="left:277.2px;top:156.6px;" width="6.4" height="3.8" viewBox="0 0 6.4 3.8"><path d="M.4 3.4L3.2 .5L6 3.4" stroke="#777" stroke-width=".9" fill="none"/></svg>
<div style="left:393.8px;top:156.4px;width:0.9px;height:22.0px;background:#EAEAEA;"></div>
<div style="left:517.6px;top:156.4px;width:0.9px;height:22.0px;background:#EAEAEA;"></div>
<div style="left:621.4px;top:156.4px;width:0.9px;height:22.0px;background:#EAEAEA;"></div>
<div style="left:690.4px;top:156.4px;width:0.9px;height:22.0px;background:#EAEAEA;"></div>
<span style="left:172.2px;top:162.80px;font-size:9.8px;color:#4C607A;transform:scaleX(0.9411);">Name</span>
<span style="left:398.2px;top:162.80px;font-size:9.8px;color:#4C607A;transform:scaleX(0.9677);">Date modified</span>
<span style="left:523.2px;top:162.80px;font-size:9.8px;color:#4C607A;transform:scaleX(0.8753);">Type</span>
<span style="left:626.2px;top:162.80px;font-size:9.8px;color:#4C607A;transform:scaleX(0.8498);">Size</span>
<div style="left:749.2px;top:156px;width:12.8px;height:287px;background:#F0F0F0;"></div>
<div style="left:749.2px;top:169.6px;width:12.8px;height:172.0px;background:#CDCDCD;"></div>
<svg style="left:752.2px;top:160.8px;" width="6.6" height="4.6" viewBox="0 0 6.6 4.6"><path d="M.5 4.1L3.3 1L6.1 4.1" stroke="#3a3a3a" stroke-width="1.2" fill="none"/></svg>
<svg style="left:752.2px;top:434.6px;" width="6.6" height="4.6" viewBox="0 0 6.6 4.6"><path d="M.5 .5L3.3 3.6L6.1 .5" stroke="#3a3a3a" stroke-width="1.2" fill="none"/></svg>
<div style="left:169px;top:427px;width:520.6px;height:16px;background:#DADADA;"></div>
<svg style="left:173px;top:183.2px;filter:blur(.8px)" width="14" height="14" viewBox="0 0 14 14"><rect x="1.4" y="1.6" width="7.9" height="10" fill="#F8DD8C"/><rect x="1.4" y="1.6" width="2.6" height="10" fill="#F4D070"/><rect x="6.8" y="4.4" width="2.6" height="3" fill="#A9B6C6"/><rect x="4.8" y="7.4" width="7" height="4.1" fill="#4A90E2"/><rect x="9.4" y="8.6" width="2.4" height="2.9" fill="#8DBBF0"/></svg>
<span class="b" style="left:187.8px;top:186.20px;font-size:9.8px;color:#55585e;"><span style="display:inline-block;transform-origin:0 50%;transform:scaleX(0.9447);">Gadgets</span></span>
<span style="left:398.2px;top:186.20px;font-size:9.8px;color:#6D6D6D;transform:scaleX(0.9622);">06/10/2020 23:04</span>
<span style="left:522.8px;top:186.20px;font-size:9.8px;color:#6D6D6D;transform:scaleX(0.9276);">File folder</span>
<svg style="left:173px;top:199.55999999999997px;filter:blur(.8px)" width="14" height="14" viewBox="0 0 14 14"><rect x="1.4" y="1.6" width="7.9" height="10" fill="#F8DD8C"/><rect x="1.4" y="1.6" width="2.6" height="10" fill="#F4D070"/><rect x="6.8" y="4.4" width="2.6" height="3" fill="#A9B6C6"/><rect x="4.8" y="7.4" width="7" height="4.1" fill="#4A90E2"/><rect x="9.4" y="8.6" width="2.4" height="2.9" fill="#8DBBF0"/></svg>
<span class="b" style="left:187.8px;top:202.56px;font-size:9.8px;color:#55585e;"><span style="display:inline-block;transform-origin:0 50%;transform:scaleX(0.9085);">Smartphone Reviews</span></span>
<span style="left:398.2px;top:202.56px;font-size:9.8px;color:#6D6D6D;transform:scaleX(0.9622);">04/10/2020 22:26</span>
<span style="left:522.8px;top:202.56px;font-size:9.8px;color:#6D6D6D;transform:scaleX(0.9276);">File folder</span>
<svg style="left:172px;top:217.92px;filter:blur(.8px);overflow:visible" width="12.6" height="10.4" viewBox="0 0 12.6 10.4"><rect x="2.2" y="-.6" width="7" height="11.6" fill="#d6d6d6"/><rect x="8" y="1.6" width="4.6" height="8.4" fill="#cfd2d0"/><rect x="0" y="1.6" width="9.2" height="7.2" fill="#58AC6C"/><rect x="1.8" y="2.6" width="2" height="1.8" fill="#b9c6d6"/><rect x="4.6" y="5.2" width="2" height="1.8" fill="#3d5f8a"/><rect x="6.4" y="2.4" width="2" height="1.6" fill="#9fb2c6"/></svg>
<span class="b" style="left:187.8px;top:218.92px;font-size:9.8px;color:#55585e;"><span style="display:inline-block;transform-origin:0 50%;transform:scaleX(0.9042);">– 1PC, Mac review guide v2</span></span>
<span style="left:398.2px;top:218.92px;font-size:9.8px;color:#6D6D6D;transform:scaleX(0.9716);">22/11/2020 04:57</span>
<span style="left:522.8px;top:218.92px;font-size:9.8px;color:#6D6D6D;transform:scaleX(0.9181);">Microsoft Excel Work...</span>
<span style="left:667.4px;top:218.92px;font-size:9.8px;color:#6D6D6D;transform:scaleX(0.8518);">1 KB</span>
<svg style="left:172px;top:234.28px;filter:blur(.8px);overflow:visible" width="12.6" height="10.4" viewBox="0 0 12.6 10.4"><rect x="2.2" y="-.6" width="7" height="11.6" fill="#d6d6d6"/><rect x="8" y="1.6" width="4.6" height="8.4" fill="#cfd2d0"/><rect x="0" y="1.6" width="9.2" height="7.2" fill="#58AC6C"/><rect x="1.8" y="2.6" width="2" height="1.8" fill="#b9c6d6"/><rect x="4.6" y="5.2" width="2" height="1.8" fill="#3d5f8a"/><rect x="6.4" y="2.4" width="2" height="1.6" fill="#9fb2c6"/></svg>
<span class="b" style="left:187.8px;top:235.28px;font-size:9.8px;color:#55585e;"><span style="display:inline-block;transform-origin:0 50%;transform:scaleX(0.8953);">– 1PC, Mac review guide</span></span>
<span style="left:398.2px;top:235.28px;font-size:9.8px;color:#6D6D6D;transform:scaleX(0.9622);">07/07/2020 14:16</span>
<span style="left:522.8px;top:235.28px;font-size:9.8px;color:#6D6D6D;transform:scaleX(0.9181);">Microsoft Excel Work...</span>
<span style="left:667.4px;top:235.28px;font-size:9.8px;color:#6D6D6D;transform:scaleX(0.8518);">1 KB</span>
<svg style="left:172px;top:250.63999999999996px;filter:blur(.8px);overflow:visible" width="12.6" height="10.4" viewBox="0 0 12.6 10.4"><rect x="2.2" y="-.6" width="7" height="11.6" fill="#d6d6d6"/><rect x="8" y="1.6" width="4.6" height="8.4" fill="#cfd2d0"/><rect x="0" y="1.6" width="9.2" height="7.2" fill="#58AC6C"/><rect x="1.8" y="2.6" width="2" height="1.8" fill="#b9c6d6"/><rect x="4.6" y="5.2" width="2" height="1.8" fill="#3d5f8a"/><rect x="6.4" y="2.4" width="2" height="1.6" fill="#9fb2c6"/></svg>
<span class="b" style="left:187.8px;top:251.64px;font-size:9.8px;color:#55585e;"><span style="display:inline-block;transform-origin:0 50%;transform:scaleX(0.9103);">– 1Processor review guide</span></span>
<span style="left:398.2px;top:251.64px;font-size:9.8px;color:#6D6D6D;transform:scaleX(0.9716);">18/07/2020 11:16</span>
<span style="left:522.8px;top:251.64px;font-size:9.8px;color:#6D6D6D;transform:scaleX(0.9181);">Microsoft Excel Work...</span>
<span style="left:667.4px;top:251.64px;font-size:9.8px;color:#6D6D6D;transform:scaleX(0.8518);">1 KB</span>
<svg style="left:172px;top:267.0px;filter:blur(.8px);overflow:visible" width="12.6" height="10.4" viewBox="0 0 12.6 10.4"><rect x="2.2" y="-.6" width="7" height="11.6" fill="#d6d6d6"/><rect x="8" y="1.6" width="4.6" height="8.4" fill="#cfd2d0"/><rect x="0" y="1.6" width="9.2" height="7.2" fill="#58AC6C"/><rect x="1.8" y="2.6" width="2" height="1.8" fill="#b9c6d6"/><rect x="4.6" y="5.2" width="2" height="1.8" fill="#3d5f8a"/><rect x="6.4" y="2.4" width="2" height="1.6" fill="#9fb2c6"/></svg>
<span class="b" style="left:187.8px;top:268.00px;font-size:9.8px;color:#55585e;"><span style="display:inline-block;transform-origin:0 50%;transform:scaleX(0.9285);">– 1Smartphone review guide</span></span>
<span style="left:398.2px;top:268.00px;font-size:9.8px;color:#6D6D6D;transform:scaleX(0.9622);">17/06/2020 06:49</span>
<span style="left:522.8px;top:268.00px;font-size:9.8px;color:#6D6D6D;transform:scaleX(0.9181);">Microsoft Excel Work...</span>
<span style="left:667.4px;top:268.00px;font-size:9.8px;color:#6D6D6D;transform:scaleX(0.8518);">1 KB</span>
<svg style="left:172.6px;top:282.96000000000004px;filter:blur(.8px)" width="11" height="11.6" viewBox="0 0 11 11.6"><rect x=".6" y=".6" width="9.8" height="10.4" fill="#fbfbfb" stroke="#c9c9c9" stroke-width="1.1"/></svg>
<span class="b" style="left:187.8px;top:284.36px;font-size:9.8px;color:#55585e;"><span style="display:inline-block;transform-origin:0 50%;transform:scaleX(0.9461);">IOI881000</span></span>
<span style="left:398.2px;top:284.36px;font-size:9.8px;color:#6D6D6D;transform:scaleX(0.9622);">17/06/2020 15:09</span>
<span style="left:522.8px;top:284.36px;font-size:9.8px;color:#6D6D6D;transform:scaleX(0.9242);">File</span>
<span style="left:662.2px;top:284.36px;font-size:9.8px;color:#6D6D6D;transform:scaleX(0.8972);">11 KB</span>
<svg style="left:172.6px;top:299.32000000000005px;filter:blur(.8px)" width="11" height="11.6" viewBox="0 0 11 11.6"><rect x=".6" y=".6" width="9.8" height="10.4" fill="#efefef" stroke="#cfcfcf" stroke-width="1.1"/><rect x="2.4" y="3" width="6" height="1.1" fill="#b8b8b8"/><rect x="2.4" y="5.4" width="6" height="1.1" fill="#b8b8b8"/><rect x="2.4" y="7.8" width="6" height="1.1" fill="#b8b8b8"/></svg>
<span class="b" style="left:187.8px;top:300.72px;font-size:9.8px;color:#55585e;"><span style="display:inline-block;transform-origin:0 50%;transform:scaleX(0.8994);">AliExpress affiliate search link</span></span>
<span style="left:398.2px;top:300.72px;font-size:9.8px;color:#6D6D6D;transform:scaleX(0.9622);">25/06/2020 12:51</span>
<span style="left:522.8px;top:300.72px;font-size:9.8px;color:#6D6D6D;transform:scaleX(0.9259);">Text Document</span>
<span style="left:667.4px;top:300.72px;font-size:9.8px;color:#6D6D6D;transform:scaleX(0.8518);">1 KB</span>
<svg style="left:172.6px;top:315.68000000000006px;filter:blur(.8px)" width="11" height="11.6" viewBox="0 0 11 11.6"><rect x=".6" y=".6" width="9.8" height="10.4" fill="#f7f9fc" stroke="#dfe3ea" stroke-width="1"/><rect x="3" y="3.2" width="5.2" height="5" fill="#5A9AE8"/><rect x="4.4" y="4.4" width="2.6" height="2.8" fill="#1C4FB0"/></svg>
<span class="b" style="left:187.8px;top:317.08px;font-size:9.8px;color:#55585e;"><span style="display:inline-block;transform-origin:0 50%;transform:scaleX(0.9379);">Color Options &amp; WiFi Sizes - do not delete</span></span>
<span style="left:398.2px;top:317.08px;font-size:9.8px;color:#6D6D6D;transform:scaleX(0.9622);">22/06/2020 18:01</span>
<span style="left:522.8px;top:317.08px;font-size:9.8px;color:#6D6D6D;transform:scaleX(0.8528);">PNG File</span>
<span style="left:656.4px;top:317.08px;font-size:9.8px;color:#6D6D6D;transform:scaleX(0.9054);">803 KB</span>
<svg style="left:172px;top:332.44000000000005px;filter:blur(.8px)" width="12.6" height="10.4" viewBox="0 0 12.6 10.4"><rect x="3" y="0" width="9" height="10.4" fill="#e9eef6"/><rect x="0" y="1.2" width="9.4" height="8" fill="#5B9CE8"/><rect x="1.6" y="2.6" width="2" height="2" fill="#d4e6fa"/><rect x="5.2" y="2.8" width="2" height="2" fill="#2d62b4"/><rect x="3.2" y="5.6" width="2.4" height="2" fill="#c2dbf7"/><rect x="6.8" y="6" width="1.8" height="1.8" fill="#3f7fd4"/><rect x="9.4" y="2.4" width="2.6" height="1.2" fill="#b8c6da"/></svg>
<span class="b" style="left:187.8px;top:333.44px;font-size:9.8px;color:#55585e;"><span style="display:inline-block;transform-origin:0 50%;transform:scaleX(0.9133);">Dell G7 17 7790 Review - Article Guideline</span></span>
<span style="left:398.2px;top:333.44px;font-size:9.8px;color:#6D6D6D;transform:scaleX(0.9622);">13/05/2021 20:55</span>
<span style="left:522.8px;top:333.44px;font-size:9.8px;color:#6D6D6D;transform:scaleX(0.9436);">Microsoft Word Doc...</span>
<span style="left:662.2px;top:333.44px;font-size:9.8px;color:#6D6D6D;transform:scaleX(0.8726);">19 KB</span>
<svg style="left:172.6px;top:348.40000000000003px;filter:blur(.8px)" width="11" height="11.6" viewBox="0 0 11 11.6"><rect x=".6" y=".6" width="9.8" height="10.4" fill="#efefef" stroke="#cfcfcf" stroke-width="1.1"/><rect x="2.4" y="3" width="6" height="1.1" fill="#b8b8b8"/><rect x="2.4" y="5.4" width="6" height="1.1" fill="#b8b8b8"/><rect x="2.4" y="7.8" width="6" height="1.1" fill="#b8b8b8"/></svg>
<span class="b" style="left:187.8px;top:349.80px;font-size:9.8px;color:#55585e;"><span style="display:inline-block;transform-origin:0 50%;transform:scaleX(0.9289);">DO NOT enable User rating in plugin - Global - ...</span></span>
<span style="left:398.2px;top:349.80px;font-size:9.8px;color:#6D6D6D;transform:scaleX(0.9622);">20/06/2020 18:00</span>
<span style="left:522.8px;top:349.80px;font-size:9.8px;color:#6D6D6D;transform:scaleX(0.9259);">Text Document</span>
<span style="left:667.4px;top:349.80px;font-size:9.8px;color:#6D6D6D;transform:scaleX(0.8518);">1 KB</span>
<svg style="left:172.6px;top:364.76px;filter:blur(.8px)" width="11" height="11.6" viewBox="0 0 11 11.6"><rect x=".6" y=".6" width="9.8" height="10.4" fill="#efefef" stroke="#cfcfcf" stroke-width="1.1"/><rect x="2.4" y="3" width="6" height="1.1" fill="#b8b8b8"/><rect x="2.4" y="5.4" width="6" height="1.1" fill="#b8b8b8"/><rect x="2.4" y="7.8" width="6" height="1.1" fill="#b8b8b8"/></svg>
<span class="b" style="left:187.8px;top:366.16px;font-size:9.8px;color:#55585e;"><span style="display:inline-block;transform-origin:0 50%;transform:scaleX(0.9298);">how to insert Review Shortcode - including co...</span></span>
<span style="left:398.2px;top:366.16px;font-size:9.8px;color:#6D6D6D;transform:scaleX(0.9622);">20/06/2020 18:28</span>
<span style="left:522.8px;top:366.16px;font-size:9.8px;color:#6D6D6D;transform:scaleX(0.9259);">Text Document</span>
<span style="left:667.4px;top:366.16px;font-size:9.8px;color:#6D6D6D;transform:scaleX(0.8518);">1 KB</span>
<svg style="left:172px;top:381.52px;filter:blur(.8px)" width="12.6" height="10.4" viewBox="0 0 12.6 10.4"><rect x="3" y="0" width="9" height="10.4" fill="#e9eef6"/><rect x="0" y="1.2" width="9.4" height="8" fill="#5B9CE8"/><rect x="1.6" y="2.6" width="2" height="2" fill="#d4e6fa"/><rect x="5.2" y="2.8" width="2" height="2" fill="#2d62b4"/><rect x="3.2" y="5.6" width="2.4" height="2" fill="#c2dbf7"/><rect x="6.8" y="6" width="1.8" height="1.8" fill="#3f7fd4"/><rect x="9.4" y="2.4" width="2.6" height="1.2" fill="#b8c6da"/></svg>
<span class="b" style="left:187.8px;top:382.52px;font-size:9.8px;color:#55585e;"><span style="display:inline-block;transform-origin:0 50%;transform:scaleX(0.9305);">How to Insert Visitor Review to a Post v1.0</span></span>
<span style="left:398.2px;top:382.52px;font-size:9.8px;color:#6D6D6D;transform:scaleX(0.9622);">24/06/2020 13:05</span>
<span style="left:522.8px;top:382.52px;font-size:9.8px;color:#6D6D6D;transform:scaleX(0.9436);">Microsoft Word Doc...</span>
<span style="left:656.4px;top:382.52px;font-size:9.8px;color:#6D6D6D;transform:scaleX(0.9054);">492 KB</span>
<svg style="left:173.4px;top:397.68px;filter:blur(.8px)" width="10" height="11" viewBox="0 0 10 11"><rect x=".6" y=".6" width="8.4" height="9.8" fill="#dfeeff"/><rect x="2.4" y="3.4" width="5" height="4.6" fill="#6AAAF2"/><rect x="2.4" y="2" width="5" height="1" fill="#a8cdf8"/></svg>
<span class="b" style="left:187.8px;top:398.88px;font-size:9.8px;color:#55585e;"><span style="display:inline-block;transform-origin:0 50%;transform:scaleX(0.9497);">idea</span></span>
<span style="left:398.2px;top:398.88px;font-size:9.8px;color:#6D6D6D;transform:scaleX(0.9622);">04/10/2020 22:26</span>
<span style="left:522.8px;top:398.88px;font-size:9.8px;color:#6D6D6D;transform:scaleX(0.9490);">Google document</span>
<span style="left:667.4px;top:398.88px;font-size:9.8px;color:#6D6D6D;transform:scaleX(0.8518);">1 KB</span>
<svg style="left:172.6px;top:413.84000000000003px;filter:blur(.8px)" width="11" height="11.6" viewBox="0 0 11 11.6"><rect x=".6" y=".6" width="9.8" height="10.4" fill="#f4f6fa" stroke="#d4d8e0" stroke-width="1"/><rect x="3.2" y="2.6" width="4.6" height="5" fill="#3F7FDC"/><rect x="1.6" y="8.6" width="8" height="1.6" fill="#444"/></svg>
<span class="b" style="left:187.8px;top:415.24px;font-size:9.8px;color:#55585e;"><span style="display:inline-block;transform-origin:0 50%;transform:scaleX(0.9580);">Moto G4</span></span>
<span style="left:398.2px;top:415.24px;font-size:9.8px;color:#6D6D6D;transform:scaleX(0.9622);">03/08/2020 14:48</span>
<span style="left:522.8px;top:415.24px;font-size:9.8px;color:#6D6D6D;transform:scaleX(0.8528);">PNG File</span>
<span style="left:656.4px;top:415.24px;font-size:9.8px;color:#6D6D6D;transform:scaleX(0.9054);">171 KB</span>
<svg style="left:172.4px;top:430.40000000000003px;" width="11" height="10.6" viewBox="0 0 11 10.6"><path d="M4.2 .5H9L10.6 2.1V10.1H4.2Z" fill="#fff" stroke="#7d8fa8" stroke-width=".7"/><rect x="6.6" y="3.6" width="3" height=".7" fill="#7da3d8"/><rect x="6.6" y="5.2" width="3" height=".7" fill="#7da3d8"/><rect x="6.6" y="6.8" width="3" height=".7" fill="#7da3d8"/><rect x="0" y="2" width="6.2" height="6.6" fill="#2B6BC8"/><path d="M1.2 3.6L2 7L3.1 4.4L4.2 7L5 3.6" stroke="#fff" stroke-width=".75" fill="none"/></svg>
<span style="left:188.2px;top:431.60px;font-size:9.8px;color:#151515;transform:scaleX(0.9091);">New Smartphone Review Guideline</span>
<span style="left:398.2px;top:431.60px;font-size:9.8px;color:#6D6D6D;transform:scaleX(0.9622);">04/02/2021 09:16</span>
<span style="left:522.8px;top:431.60px;font-size:9.8px;color:#6D6D6D;transform:scaleX(0.9436);">Microsoft Word Doc...</span>
<span style="left:662.2px;top:431.60px;font-size:9.8px;color:#6D6D6D;transform:scaleX(0.8726);">15 KB</span>
<span style="left:31.4px;top:448.20px;font-size:9.8px;color:#2c3f6b;transform:scaleX(0.9532);">24 items</span>
<div style="left:75px;top:447px;width:1px;height:11.6px;background:#E9E9E9;"></div>
<span style="left:84.1px;top:448.20px;font-size:9.8px;color:#2c3f6b;transform:scaleX(0.9152);">1 item selected</span>
<span style="left:150.3px;top:448.20px;font-size:9.8px;color:#2c3f6b;transform:scaleX(0.8692);">14.9 KB</span>
<div style="left:724.2px;top:443.2px;width:16.6px;height:17.8px;background:#CCE4F7;border:1px solid #8FC3F0;box-sizing:border-box"></div>
<svg style="left:727.4px;top:446.6px;" width="10.4" height="10.4" viewBox="0 0 10.4 10.4"><rect x=".3" y="0.2" width="1.8" height="1.7" fill="#F3F5F8" stroke="#aab2bd" stroke-width=".4"/><rect x="3.4" y="0.7" width="6.6" height=".7" fill="#7d838c"/><rect x=".3" y="2.7" width="1.8" height="1.7" fill="#F3F5F8" stroke="#aab2bd" stroke-width=".4"/><rect x="3.4" y="3.2" width="6.6" height=".7" fill="#7d838c"/><rect x=".3" y="5.2" width="1.8" height="1.7" fill="#E8A07A" stroke="#aab2bd" stroke-width=".4"/><rect x="3.4" y="5.7" width="6.6" height=".7" fill="#7d838c"/><rect x=".3" y="7.7" width="1.8" height="1.7" fill="#F3F5F8" stroke="#aab2bd" stroke-width=".4"/><rect x="3.4" y="8.2" width="6.6" height=".7" fill="#7d838c"/></svg>
<svg style="left:744.4px;top:448px;" width="10.6" height="7.8" viewBox="0 0 10.6 7.8"><rect x=".4" y=".4" width="9.799999999999999" height="7.0" fill="#f4f4f4" stroke="#b0b0b0" stroke-width=".8"/><rect x="1.2" y="1.2" width="8.2" height="5.4" fill="#4A97E6"/><rect x="1.2" y="2.8200000000000003" width="8.2" height="1.62" fill="#CFE3F6"/><path d="M1.2 3.468L3.6599999999999993 3.252L8.989999999999998 5.088L1.2 5.412000000000001Z" fill="#3A4450"/><rect x="1.2" y="5.412000000000001" width="8.2" height="1.1880000000000002" fill="#3C86DA"/></svg>
</div></body></html>
